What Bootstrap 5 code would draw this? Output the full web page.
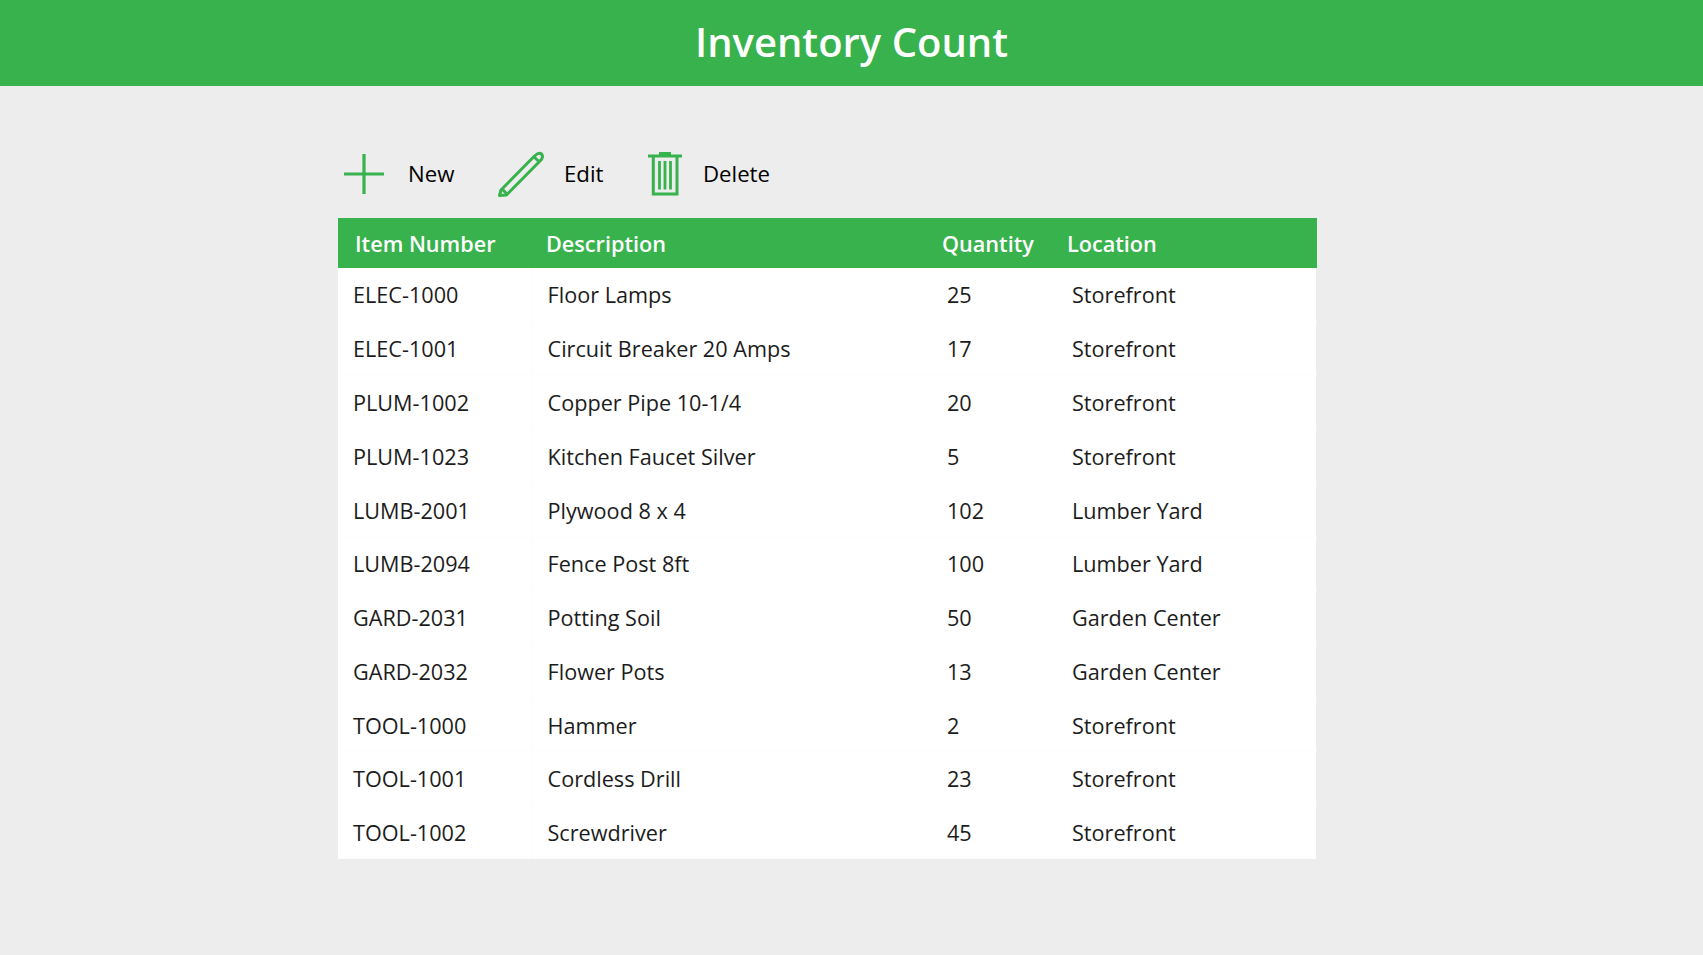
<!DOCTYPE html>
<html lang="en">
<head>
<meta charset="utf-8">
<title>Inventory Count</title>
<link href="https://cdn.jsdelivr.net/npm/bootstrap@5.3.0/dist/css/bootstrap.min.css" rel="stylesheet">
<style>
html, body { height: 100%; }
body { background: #ededed; font-family: "Open Sans", "Liberation Sans", sans-serif; color: #1c1c1c; }
.app-head { background: #37b24d; height: 86px; color: #fff; padding-bottom: 2px; }
.app-head h1 { font-size: 40px; font-weight: 600; margin: 0; line-height: 1; }
.work { width: 979px; margin-left: 338px; padding-top: 44px; }
.tools { height: 88px; padding-left: 5px; }
.tool-btn { background: none; border: 0; padding: 0; color: #000; font-size: 22.2px; font-weight: 500; line-height: 30px; display: flex; align-items: center; }
.tool-new { width: 155px; } .tool-new svg { margin-right: 23px; }
.tool-edit { width: 150px; } .tool-edit svg { margin-right: 20px; }
.tool-del svg { margin-right: 21px; }
.inv { table-layout: fixed; width: 979px; margin: 0; font-size: 21.65px; }
.inv th { background: #37b24d; color: #fff; font-weight: 600; height: 50px; padding: 1px 0 0; vertical-align: middle; border: 0; line-height: 1; }
.inv td { background: #fff; color: #1c1c1c; height: 53.75px; padding: 1px 0 0 15px; vertical-align: middle; border: 0; line-height: 1; }
.inv td:first-child { border-right: 1px solid #fbfbfb; }
.inv td:last-child { box-shadow: inset -1px 0 0 #ededed; }
.inv tbody tr + tr td { border-top: 1px solid #fdfdfd; }
.c1 { width: 194px; } .c2 { width: 400px; } .c3 { width: 125px; } .c4 { width: 260px; }
.inv th.t1 { padding-left: 17px; } .inv th.t2 { padding-left: 14px; } .inv th.t3 { padding-left: 10px; } .inv th.t4 { padding-left: 10px; }
</style>
</head>
<body>
<header class="app-head d-flex align-items-center justify-content-center"><h1>Inventory Count</h1></header>
<main class="work">
  <div class="tools d-flex align-items-center">
    <button class="tool-btn tool-new" type="button">
      <svg width="42" height="42" viewBox="0 0 42 42" fill="none" stroke="#37b24d" stroke-width="3.200"><path d="M21 1V41M1 21H41"/></svg>New
    </button>
    <button class="tool-btn tool-edit" type="button">
      <svg width="46" height="46" viewBox="0 0 46 46" fill="none" stroke="#37b24d" stroke-width="3" stroke-linejoin="round"><path d="M3 39 36.500 5Q41 1 43.500 3 46 6 42 10L8.500 44 1.500 44.500Z"/><path d="M4 38 9.500 43.500M35.500 5.500 41.500 11"/></svg>Edit
    </button>
    <button class="tool-btn tool-del" type="button">
      <svg width="34" height="44" viewBox="0 0 34 44" fill="none" stroke="#37b24d" stroke-width="3"><path d="M0 4H34M11 1.500H23M5.300 4V42H29V4"/><path stroke-width="2.800" d="M11.500 9V37.500M17 9V37.500M22.500 9V37.500"/></svg>Delete
    </button>
  </div>
  <table class="table inv">
    <colgroup><col class="c1"><col class="c2"><col class="c3"><col class="c4"></colgroup>
    <thead><tr><th class="t1">Item Number</th><th class="t2">Description</th><th class="t3">Quantity</th><th class="t4">Location</th></tr></thead>
    <tbody>
      <tr><td>ELEC-1000</td><td>Floor Lamps</td><td>25</td><td>Storefront</td></tr>
      <tr><td>ELEC-1001</td><td>Circuit Breaker 20 Amps</td><td>17</td><td>Storefront</td></tr>
      <tr><td>PLUM-1002</td><td>Copper Pipe 10-1/4</td><td>20</td><td>Storefront</td></tr>
      <tr><td>PLUM-1023</td><td>Kitchen Faucet Silver</td><td>5</td><td>Storefront</td></tr>
      <tr><td>LUMB-2001</td><td>Plywood 8 x 4</td><td>102</td><td>Lumber Yard</td></tr>
      <tr><td>LUMB-2094</td><td>Fence Post 8ft</td><td>100</td><td>Lumber Yard</td></tr>
      <tr><td>GARD-2031</td><td>Potting Soil</td><td>50</td><td>Garden Center</td></tr>
      <tr><td>GARD-2032</td><td>Flower Pots</td><td>13</td><td>Garden Center</td></tr>
      <tr><td>TOOL-1000</td><td>Hammer</td><td>2</td><td>Storefront</td></tr>
      <tr><td>TOOL-1001</td><td>Cordless Drill</td><td>23</td><td>Storefront</td></tr>
      <tr><td>TOOL-1002</td><td>Screwdriver</td><td>45</td><td>Storefront</td></tr>
    </tbody>
  </table>
</main>
<script src="https://cdn.jsdelivr.net/npm/bootstrap@5.3.0/dist/js/bootstrap.bundle.min.js"></script>
</body>
</html>
